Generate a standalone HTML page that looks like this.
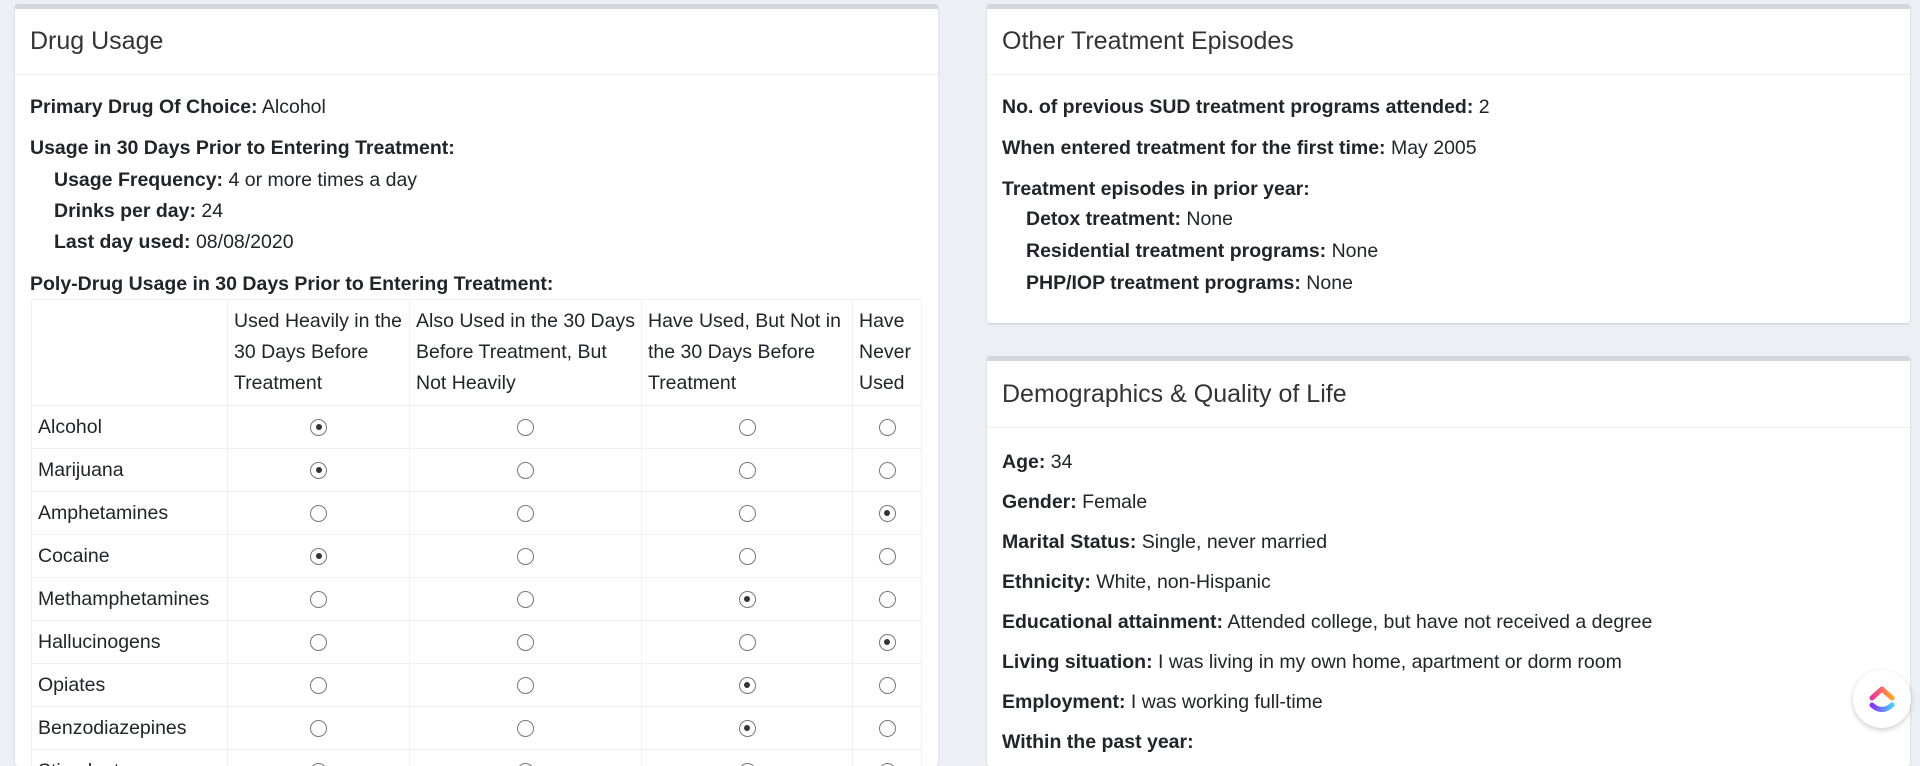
<!DOCTYPE html>
<html><head><meta charset="utf-8"><style>
*{box-sizing:border-box;margin:0;padding:0}
html,body{width:1920px;height:766px;overflow:hidden}
body{background:#eceff3;font-family:"Liberation Sans",sans-serif;color:#212529;font-size:19.5px;position:relative}
.card{position:absolute;background:#fff;border-top:5px solid #d2d6de;box-shadow:0 1px 2px rgba(0,0,0,.15);border-radius:3px;overflow:hidden}
.hd{position:absolute;left:0;right:0;top:0;border-bottom:1px solid #eef0f2}
.ttl{position:absolute;font-size:25px;color:#333}
.t{position:absolute;white-space:nowrap}
b{font-weight:bold}
table{position:absolute;border-collapse:collapse;left:16px;top:290px;width:891px}
td{border:1px solid #eef0f2;height:43px;padding:0 6px;vertical-align:middle}
th{border:1px solid #eef0f2;font-weight:normal;text-align:left;vertical-align:top;padding:6px 6px;line-height:31px;height:106px}
.r{text-align:center}
.rd{display:inline-block;width:17px;height:17px;border:1px solid #777;border-radius:50%;position:relative;vertical-align:middle}
.rd.on::after{content:"";position:absolute;left:4.5px;top:4.5px;width:6px;height:6px;border-radius:50%;background:#333}
</style></head><body>
<div class="card" style="left:15px;top:4px;width:923px;height:762px">
 <div class="hd" style="height:66px"></div>
 <div class="ttl" style="left:15px;top:18px">Drug Usage</div>
 <div class="t" style="left:15px;top:87px"><b>Primary Drug Of Choice:</b> Alcohol</div>
 <div class="t" style="left:15px;top:128px"><b>Usage in 30 Days Prior to Entering Treatment:</b></div>
 <div class="t" style="left:39px;top:160px"><b>Usage Frequency:</b> 4 or more times a day</div>
 <div class="t" style="left:39px;top:191px"><b>Drinks per day:</b> 24</div>
 <div class="t" style="left:39px;top:222px"><b>Last day used:</b> 08/08/2020</div>
 <div class="t" style="left:15px;top:264px"><b>Poly-Drug Usage in 30 Days Prior to Entering Treatment:</b></div>
 <table>
 <tr><th style="width:196px"></th><th style="width:182px">Used Heavily in the 30 Days Before Treatment</th><th style="width:232px">Also Used in the 30 Days Before Treatment, But Not Heavily</th><th style="width:211px">Have Used, But Not in the 30 Days Before Treatment</th><th>Have Never Used</th></tr>
 <tr><td>Alcohol</td><td class="r"><span class="rd on"></span></td><td class="r"><span class="rd"></span></td><td class="r"><span class="rd"></span></td><td class="r"><span class="rd"></span></td></tr>
 <tr><td>Marijuana</td><td class="r"><span class="rd on"></span></td><td class="r"><span class="rd"></span></td><td class="r"><span class="rd"></span></td><td class="r"><span class="rd"></span></td></tr>
 <tr><td>Amphetamines</td><td class="r"><span class="rd"></span></td><td class="r"><span class="rd"></span></td><td class="r"><span class="rd"></span></td><td class="r"><span class="rd on"></span></td></tr>
 <tr><td>Cocaine</td><td class="r"><span class="rd on"></span></td><td class="r"><span class="rd"></span></td><td class="r"><span class="rd"></span></td><td class="r"><span class="rd"></span></td></tr>
 <tr><td>Methamphetamines</td><td class="r"><span class="rd"></span></td><td class="r"><span class="rd"></span></td><td class="r"><span class="rd on"></span></td><td class="r"><span class="rd"></span></td></tr>
 <tr><td>Hallucinogens</td><td class="r"><span class="rd"></span></td><td class="r"><span class="rd"></span></td><td class="r"><span class="rd"></span></td><td class="r"><span class="rd on"></span></td></tr>
 <tr><td>Opiates</td><td class="r"><span class="rd"></span></td><td class="r"><span class="rd"></span></td><td class="r"><span class="rd on"></span></td><td class="r"><span class="rd"></span></td></tr>
 <tr><td>Benzodiazepines</td><td class="r"><span class="rd"></span></td><td class="r"><span class="rd"></span></td><td class="r"><span class="rd on"></span></td><td class="r"><span class="rd"></span></td></tr>
 <tr><td>Stimulants</td><td class="r"><span class="rd"></span></td><td class="r"><span class="rd"></span></td><td class="r"><span class="rd"></span></td><td class="r"><span class="rd"></span></td></tr>
 </table>
</div>
<div class="card" style="left:987px;top:4px;width:923px;height:319px">
 <div class="hd" style="height:66px"></div>
 <div class="ttl" style="left:15px;top:18px">Other Treatment Episodes</div>
 <div class="t" style="left:15px;top:87px"><b>No. of previous SUD treatment programs attended:</b> 2</div>
 <div class="t" style="left:15px;top:128px"><b>When entered treatment for the first time:</b> May 2005</div>
 <div class="t" style="left:15px;top:169px"><b>Treatment episodes in prior year:</b></div>
 <div class="t" style="left:39px;top:199px"><b>Detox treatment:</b> None</div>
 <div class="t" style="left:39px;top:231px"><b>Residential treatment programs:</b> None</div>
 <div class="t" style="left:39px;top:263px"><b>PHP/IOP treatment programs:</b> None</div>
</div>
<div class="card" style="left:987px;top:356px;width:923px;height:410px">
 <div class="hd" style="height:67px"></div>
 <div class="ttl" style="left:15px;top:19px">Demographics &amp; Quality of Life</div>
 <div class="t" style="left:15px;top:90px"><b>Age:</b> 34</div>
 <div class="t" style="left:15px;top:130px"><b>Gender:</b> Female</div>
 <div class="t" style="left:15px;top:170px"><b>Marital Status:</b> Single, never married</div>
 <div class="t" style="left:15px;top:210px"><b>Ethnicity:</b> White, non-Hispanic</div>
 <div class="t" style="left:15px;top:250px"><b>Educational attainment:</b> Attended college, but have not received a degree</div>
 <div class="t" style="left:15px;top:290px"><b>Living situation:</b> I was living in my own home, apartment or dorm room</div>
 <div class="t" style="left:15px;top:330px"><b>Employment:</b> I was working full-time</div>
 <div class="t" style="left:15px;top:370px"><b>Within the past year:</b></div>
 <div class="t" style="left:39px;top:402px">Experienced problems in relationships with family or staff</div>
</div>
<div style="position:absolute;left:1853px;top:670px;width:58px;height:58px;border-radius:50%;background:#fff;box-shadow:0 2px 6px rgba(0,0,0,.2)">
<svg width="58" height="58" viewBox="0 0 58 58"><defs><linearGradient id="g1" x1="0" x2="1"><stop offset="0" stop-color="#f0329a"/><stop offset="1" stop-color="#ffa62b"/></linearGradient><linearGradient id="g2" x1="0" x2="1"><stop offset="0" stop-color="#8930fd"/><stop offset="1" stop-color="#49ccf9"/></linearGradient></defs>
<path d="M19 28 L29 19 L39 28" fill="none" stroke="url(#g1)" stroke-width="5" stroke-linecap="round" stroke-linejoin="round"/>
<path d="M19 35 Q29 44 39 35" fill="none" stroke="url(#g2)" stroke-width="5" stroke-linecap="round"/></svg></div>
</body></html>
